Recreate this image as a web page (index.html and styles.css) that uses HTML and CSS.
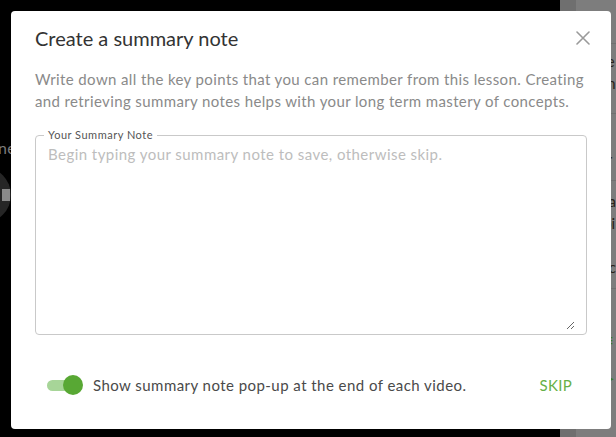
FILE: index.html
```html
<!DOCTYPE html>
<html lang="en">
<head>
<meta charset="utf-8">
<title>Create a summary note</title>
<link rel="stylesheet" href="styles.css">
</head>
<body>
<div class="page">
  <div class="video">
    <div class="peek-text">ne</div>
    <div class="peek-ctrl"><span class="peek-bar"></span></div>
  </div>
  <aside class="sidebar">
    <div class="sb-gutter"></div>
    <div class="sb-list">
      <div class="sb-row r1"><span>a</span></div>
      <div class="sb-row r2"><span>le</span><span>m</span></div>
      <div class="sb-row r3"><span>e</span><span>ir</span></div>
      <div class="sb-row r4"><span>ta</span><span>pi</span><span>/</span><span>-c</span></div>
      <div class="sb-row r5"><span class="sb-icon">&#8801;</span></div>
      <div class="sb-row r6"><span class="sb-icon play">&#9654;</span></div>
    </div>
  </aside>
</div>

<div class="modal" role="dialog" aria-labelledby="modal-title">
  <div class="modal-head">
    <h2 id="modal-title" class="modal-title">Create a summary note</h2>
    <button class="close-btn" aria-label="Close">
      <svg width="14" height="14" viewBox="0 0 14 14"><path d="M1 1L13 13M13 1L1 13" stroke="#9a9a9a" stroke-width="1.6" fill="none" stroke-linecap="round"/></svg>
    </button>
  </div>
  <p class="modal-desc">Write down all the key points that you can remember from this lesson. Creating and retrieving summary notes helps with your long term mastery of concepts.</p>
  <fieldset class="note-field">
    <legend class="note-legend">Your Summary Note</legend>
    <textarea class="note-input" placeholder="Begin typing your summary note to save, otherwise skip."></textarea>
  </fieldset>
  <div class="modal-foot">
    <label class="toggle-wrap">
      <span class="toggle"><span class="toggle-knob"></span></span>
      <span class="toggle-label">Show summary note pop-up at the end of each video.</span>
    </label>
    <button class="skip-btn">SKIP</button>
  </div>
</div>
</body>
</html>
```

FILE: styles.css
```css
* { box-sizing: border-box; }

html, body {
  margin: 0;
  padding: 0;
  width: 616px;
  height: 437px;
  overflow: hidden;
  background: #000;
  font-family: "Lato", "Liberation Sans", sans-serif;
}

.page {
  display: flex;
  width: 616px;
  height: 437px;
}

.video {
  width: 568px;
  height: 437px;
  background: #000;
  display: flex;
  flex-direction: column;
  padding-top: 139px;
}

.peek-text {
  color: #7a7a7a;
  font-size: 16px;
  line-height: 18px;
  margin-left: -2px;
  letter-spacing: 0.4px;
}

.peek-ctrl {
  width: 56px;
  height: 56px;
  border-radius: 50%;
  background: #262626;
  margin-left: -45px;
  margin-top: 10px;
  display: flex;
  align-items: center;
  justify-content: flex-end;
  padding-right: 1px;
}

.peek-bar {
  width: 8px;
  height: 12px;
  background: #8a8a8a;
}

.sidebar {
  flex: 1;
  display: flex;
  height: 437px;
}

.sb-gutter {
  width: 16px;
  background: #6f6f6f;
}

.sb-list {
  flex: 1;
  background: #7d7d7d;
  display: flex;
  flex-direction: column;
}

.sb-row {
  display: flex;
  flex-direction: column;
  padding-left: 27px;
  color: #2a2218;
  font-size: 15px;
  line-height: 22px;
  border-bottom: 1px solid #707070;
  white-space: nowrap;
  overflow: hidden;
}

.r1 { height: 44px; padding-top: 11px; }
.r2 { height: 70px; padding-top: 6px; }
.r3 { height: 67px; padding-top: 12px; }
.r4 { height: 108px; padding-top: 9px; }
.r5 { height: 72px; padding-top: 40px; border-bottom: none; }
.r6 { flex: 1; padding-top: 6px; border-bottom: none; }

.sb-icon {
  color: #3f7a22;
  font-size: 18px;
}

.sb-icon.play { font-size: 14px; }

.modal {
  position: absolute;
  left: 11px;
  top: 11px;
  width: 600px;
  height: 418px;
  background: #fff;
  border-radius: 4px;
  display: flex;
  flex-direction: column;
  padding: 13px 24px 0 24px;
}

.modal-head {
  display: flex;
  align-items: center;
  justify-content: space-between;
  height: 28px;
}

.modal-title {
  margin: 0;
  font-size: 20px;
  line-height: 28px;
  font-weight: 400;
  color: #333;
}

.close-btn {
  border: 0;
  background: none;
  padding: 0;
  margin-right: -3px;
  width: 14px;
  height: 14px;
  display: flex;
}

.modal-desc {
  margin: 16px -4px 0 0;
  font-size: 15px;
  line-height: 22px;
  letter-spacing: 0.38px;
  color: #8a8a8a;
}

.note-field {
  margin: 16px 0 0 0;
  padding: 0 11px 4px 0;
  border: 1px solid #c9c9c9;
  border-radius: 4px;
  min-width: 0;
}

.note-legend {
  margin-left: 8px;
  padding: 0 4px;
  font-size: 11px;
  line-height: 14px;
  letter-spacing: 0.5px;
  color: #555;
}

.note-input {
  display: block;
  width: 100%;
  height: 188px;
  border: 0;
  outline: none;
  padding: 1px 12px;
  font-family: "Lato", "Liberation Sans", sans-serif;
  font-size: 15px;
  line-height: 22px;
  letter-spacing: 0.45px;
  color: #333;
  background: transparent;
  resize: vertical;
}

.note-input::placeholder {
  color: #bdbdbd;
}

.modal-foot {
  margin-top: 30px;
  height: 40px;
  display: flex;
  align-items: center;
  justify-content: space-between;
  padding-left: 12px;
  padding-right: 15px;
}

.toggle-wrap {
  display: flex;
  align-items: center;
}

.toggle {
  position: relative;
  width: 32px;
  height: 11px;
  border-radius: 6px;
  background: #a7d598;
}

.toggle-knob {
  position: absolute;
  left: 16px;
  top: -4.5px;
  width: 20px;
  height: 20px;
  border-radius: 50%;
  background: #58a834;
}

.toggle-label {
  margin-left: 14px;
  font-size: 15px;
  letter-spacing: 0.45px;
  color: #4a4a4a;
}

.skip-btn {
  border: 0;
  background: none;
  padding: 0;
  font-family: "Lato", "Liberation Sans", sans-serif;
  font-size: 15px;
  letter-spacing: 0.3px;
  color: #66b046;
}
```
